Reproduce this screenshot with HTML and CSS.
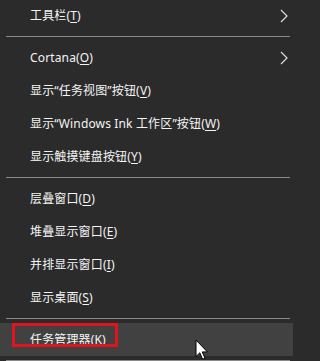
FILE: index.html
```html
<!DOCTYPE html>
<html lang="zh-CN">
<head>
<meta charset="utf-8">
<title>任务栏菜单</title>
<link rel="stylesheet" href="styles.css">
</head>
<body>
<div class="menu">
  <div class="item first"><span class="label">工具栏(<u>T</u>)</span>
    <svg class="chev" width="8" height="14" viewBox="0 0 8 14"><polyline points="1,1 7,7 1,13" fill="none" stroke="#dcdcdc" stroke-width="1.2"/></svg>
  </div>
  <div class="sep"></div>
  <div class="item"><span class="label">Cortana(<u>O</u>)</span>
    <svg class="chev" width="8" height="14" viewBox="0 0 8 14"><polyline points="1,1 7,7 1,13" fill="none" stroke="#dcdcdc" stroke-width="1.2"/></svg>
  </div>
  <div class="item"><span class="label">显示“任务视图”按钮(<u>V</u>)</span></div>
  <div class="item"><span class="label">显示“Windows Ink 工作区”按钮(<u>W</u>)</span></div>
  <div class="item"><span class="label">显示触摸键盘按钮(<u>Y</u>)</span></div>
  <div class="sep"></div>
  <div class="item"><span class="label">层叠窗口(<u>D</u>)</span></div>
  <div class="item"><span class="label">堆叠显示窗口(<u>E</u>)</span></div>
  <div class="item"><span class="label">并排显示窗口(<u>I</u>)</span></div>
  <div class="item"><span class="label">显示桌面(<u>S</u>)</span></div>
  <div class="sep"></div>
  <div class="item hover"><span class="label">任务管理器(<u>K</u>)</span>
    <div class="mark"></div>
    <svg class="cursor" width="14" height="22" viewBox="0 0 14 22"><path d="M1,1 L1,17.5 L4.8,13.8 L7.6,20.2 L10,19.2 L7.3,12.9 L12.4,12.9 Z" fill="#ffffff" stroke="#000000" stroke-width="1" stroke-linejoin="miter"/></svg>
  </div>
  <div class="sep"></div>
</div>
</body>
</html>
```

FILE: styles.css
```css
html, body {
  margin: 0;
  padding: 0;
  background: #2b2b2b;
}
body {
  font-family: "Noto Sans", "Noto Sans CJK SC", sans-serif;
  font-size: 12px;
  color: #f4f4f4;
  overflow: hidden;
}
.menu {
  width: 293px;
  display: flex;
  flex-direction: column;
}
.item {
  position: relative;
  height: 33px;
  display: flex;
  align-items: center;
  padding-left: 30px;
  padding-right: 5px;
  box-sizing: border-box;
}
.item.first {
  height: 32px;
}
.label {
  line-height: 16px;
  white-space: nowrap;
  letter-spacing: 0.15px;
}
.label u {
  text-decoration-thickness: 1px;
  text-underline-offset: 2px;
}
.chev {
  margin-left: auto;
  display: block;
}
.sep {
  height: 9px;
  display: flex;
  align-items: center;
  padding: 0 3px 0 6px;
}
.sep::before {
  content: "";
  flex: 1;
  height: 1px;
  background: #8a8a8a;
}
.hover {
  background: #414141;
  height: 33px;
}
.mark {
  position: absolute;
  left: 12px;
  top: 0;
  width: 106px;
  height: 24px;
  box-sizing: border-box;
  border: 3px solid #e0141c;
}
.cursor {
  position: absolute;
  left: 195px;
  top: 16px;
  display: block;
}
```
